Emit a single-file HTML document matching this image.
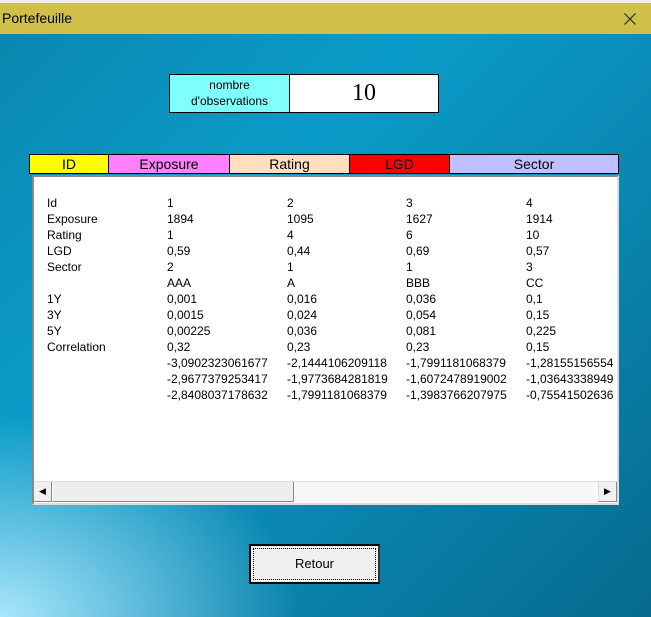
<!DOCTYPE html><html><head><style>
body{margin:0;width:651px;height:617px;overflow:hidden;position:relative;font-family:"Liberation Sans",sans-serif;
background:radial-gradient(ellipse 300px 200px at 0px 617px,#a8e6fb,rgba(120,210,240,0) 100%),linear-gradient(135deg,#0a86ad 0%,#0a9cc8 35%,#0a8ab5 60%,#066a8e 100%);}
.t{position:absolute;left:0;top:0;width:651px;height:34px;background:#d0c04a;border-top:3px solid #eee;box-sizing:border-box;font-size:14px;line-height:30px;padding-left:2px}
.a{position:absolute;box-sizing:border-box;border:1px solid #000}
.h{position:absolute;top:154px;height:20px;box-sizing:border-box;border:1px solid #000;font-size:14px;text-align:center;line-height:18px}
.lb{position:absolute;left:32px;top:175px;width:587px;height:330px;background:#fff;border:2px solid #888;border-right-color:#ddd;border-bottom-color:#ddd;box-sizing:border-box;overflow:hidden}
.c{position:absolute;font-size:12px;line-height:16px;white-space:pre}
</style></head><body>
<div class="t">Portefeuille<svg style="position:absolute;left:624px;top:10px" width="12" height="12" viewBox="0 0 12 12"><path d="M0.5 0.5L11.5 11.5M11.5 0.5L0.5 11.5" stroke="#222" stroke-width="1.1"/></svg></div>
<div class="a" style="left:169px;top:74px;width:121px;height:39px;background:#80ffff;font-size:12px;text-align:center;line-height:16px;padding-top:2px">nombre<br>d'observations</div>
<div class="a" style="left:289px;top:74px;width:150px;height:39px;background:#fff;font-family:'Liberation Serif',serif;font-size:24px;text-align:center;line-height:37px">10</div>
<div class="h" style="left:29px;width:80px;background:#ff0">ID</div>
<div class="h" style="left:108px;width:122px;background:#ff80ff">Exposure</div>
<div class="h" style="left:229px;width:121px;background:#ffdfc0">Rating</div>
<div class="h" style="left:349px;width:101px;background:#f00">LGD</div>
<div class="h" style="left:449px;width:170px;background:#c0c0ff">Sector</div>
<div class="lb">
<div class="c" style="left:13px;top:18px">Id
Exposure
Rating
LGD
Sector

1Y
3Y
5Y
Correlation</div>
<div class="c" style="left:133px;top:18px">1
1894
1
0,59
2
AAA
0,001
0,0015
0,00225
0,32
-3,0902323061677
-2,9677379253417
-2,8408037178632</div>
<div class="c" style="left:253px;top:18px">2
1095
4
0,44
1
A
0,016
0,024
0,036
0,23
-2,1444106209118
-1,9773684281819
-1,7991181068379</div>
<div class="c" style="left:372px;top:18px">3
1627
6
0,69
1
BBB
0,036
0,054
0,081
0,23
-1,7991181068379
-1,6072478919002
-1,3983766207975</div>
<div class="c" style="left:492px;top:18px">4
1914
10
0,57
3
CC
0,1
0,15
0,225
0,15
-1,28155156554
-1,03643338949
-0,75541502636</div>
<div style="position:absolute;left:0;top:304px;width:585px;height:20px;background:#f7f7f7;border-top:1px solid #ddd">
<div style="position:absolute;left:0;top:0;width:17px;height:19px;background:#f0f0f0;border-right:1px solid #888;border-bottom:1px solid #888;font-size:9px;line-height:19px;text-align:center">◀</div>
<div style="position:absolute;left:18px;top:0;width:240px;height:19px;background:#eeeeee;border-right:1px solid #888;border-bottom:1px solid #888;border-left:1px solid #fff"></div>
<div style="position:absolute;right:2px;top:0;width:17px;height:19px;background:#f0f0f0;border-left:1px solid #ddd;border-right:1px solid #888;border-bottom:1px solid #888;font-size:9px;line-height:19px;text-align:center">▶</div>
</div></div>
<div class="a" style="left:249px;top:544px;width:131px;height:40px;background:#f0f0f0;border:2px solid #000;border-right-color:#333;font-size:13px;text-align:center;line-height:36px"><div style="position:absolute;inset:2px;border:1px dotted #000"></div>Retour</div>
</body></html>
